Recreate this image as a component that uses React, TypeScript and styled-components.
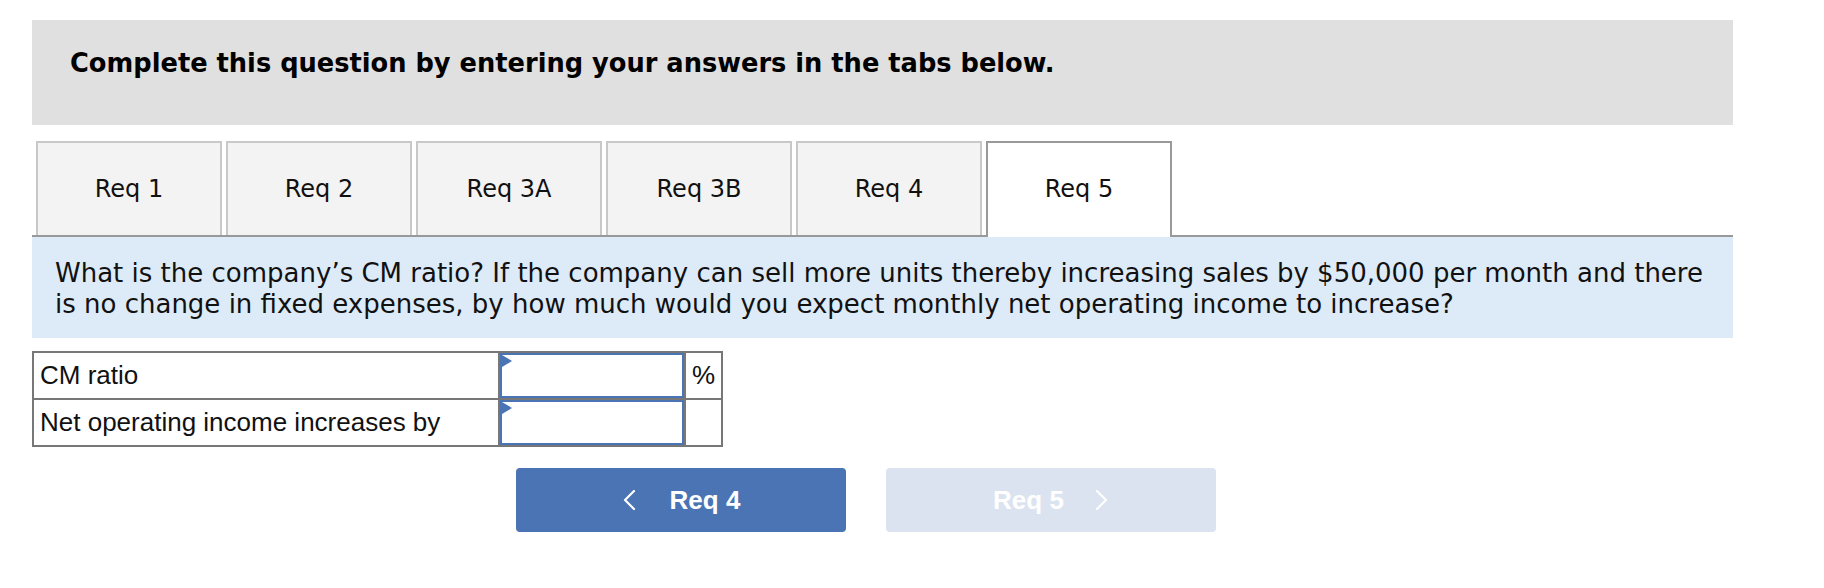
import React from "react";
import styled, { createGlobalStyle } from "styled-components";

const GlobalStyle = createGlobalStyle`
  html, body {
    margin: 0;
    padding: 0;
    background: #ffffff;
  }
  body {
    font-family: "DejaVu Sans", "Liberation Sans", sans-serif;
    color: #000;
  }
  * { box-sizing: border-box; }
`;

const Page = styled.div`
  width: 1733px;
  padding: 20px 0 40px 32px;
`;

const Header = styled.div`
  background: #e0e0e0;
  height: 105px;
  padding: 28px 0 0 38px;
`;

const HeaderText = styled.h2`
  margin: 0;
  font-family: "DejaVu Sans", sans-serif;
  font-weight: bold;
  font-size: 25.7px;
  line-height: 30px;
  color: #000;
`;

const TabBar = styled.div`
  margin-top: 16px;
  display: flex;
  align-items: flex-end;
  gap: 4px;
  padding-left: 4px;
  height: 96px;
  border-bottom: 2px solid #999999;
`;

const Tab = styled.button<{ $active?: boolean }>`
  width: 186px;
  height: ${(p) => (p.$active ? "96px" : "94px")};
  margin-bottom: ${(p) => (p.$active ? "-2px" : "0")};
  border: 2px solid ${(p) => (p.$active ? "#999999" : "#c8c8c8")};
  border-bottom: none;
  background: ${(p) => (p.$active ? "#ffffff" : "#f3f3f3")};
  font-family: "DejaVu Sans", sans-serif;
  font-size: 24px;
  color: #111;
  display: flex;
  align-items: center;
  justify-content: center;
  padding: 0 0 ${(p) => (p.$active ? "2px" : "0")};
  cursor: pointer;
`;

const Question = styled.div`
  background: #ddeaf7;
  padding: 21px 20px 19px 23px;
  font-family: "DejaVu Sans", sans-serif;
  font-size: 26px;
  line-height: 30.5px;
  color: #111;
  white-space: nowrap;
`;

const Grid = styled.div`
  margin-top: 13px;
  display: grid;
  grid-template-columns: 466px 186px 37px;
  grid-auto-rows: 47px;
  width: 691px;
  border-top: 2px solid #777777;
  border-left: 2px solid #777777;
`;

const Cell = styled.div`
  border-right: 2px solid #777777;
  border-bottom: 2px solid #777777;
  display: flex;
  align-items: center;
  font-family: "Liberation Sans", Arial, sans-serif;
  font-size: 26px;
  color: #111;
`;

const LabelCell = styled(Cell)`
  padding-left: 6px;
`;

const UnitCell = styled(Cell)`
  justify-content: center;
`;

const InputCell = styled(Cell)`
  position: relative;
  padding: 0;
`;

const Field = styled.input`
  width: 100%;
  height: 100%;
  margin: 0;
  border: 2px solid #4a74b4;
  outline: none;
  background: #fff;
  font-family: "Liberation Sans", Arial, sans-serif;
  font-size: 24px;
  padding: 0 6px;
`;

const Marker = styled.span`
  position: absolute;
  top: 2px;
  left: 2px;
  width: 0;
  height: 0;
  border-left: 10px solid #4a74b4;
  border-top: 6px solid transparent;
  border-bottom: 6px solid transparent;
  pointer-events: none;
`;

const NavRow = styled.div`
  margin-top: 21px;
  margin-left: 484px;
  display: flex;
  gap: 40px;
`;

const NavButton = styled.button<{ $disabled?: boolean }>`
  width: 330px;
  height: 64px;
  border: none;
  border-radius: 4px;
  background: ${(p) => (p.$disabled ? "#dae3ef" : "#4a74b4")};
  color: #ffffff;
  font-family: "Liberation Sans", Arial, sans-serif;
  font-weight: bold;
  font-size: 26px;
  display: flex;
  align-items: center;
  justify-content: center;
  gap: ${(p) => (p.$disabled ? "31px" : "34px")};
  padding: 0;
  cursor: ${(p) => (p.$disabled ? "default" : "pointer")};
`;

const Chevron = ({ dir }: { dir: "left" | "right" }) => (
  <svg width="14" height="22" viewBox="0 0 14 22" fill="none">
    <path
      d={dir === "left" ? "M12 2 L3 11 L12 20" : "M2 2 L11 11 L2 20"}
      stroke="#ffffff"
      strokeWidth="2.2"
      strokeLinecap="round"
      strokeLinejoin="round"
    />
  </svg>
);

const tabs = ["Req 1", "Req 2", "Req 3A", "Req 3B", "Req 4", "Req 5"];

export default function App() {
  return (
    <>
      <GlobalStyle />
      <Page>
        <Header>
          <HeaderText>Complete this question by entering your answers in the tabs below.</HeaderText>
        </Header>
        <TabBar>
          {tabs.map((t) => (
            <Tab key={t} $active={t === "Req 5"}>
              {t}
            </Tab>
          ))}
        </TabBar>
        <Question>
          What is the company’s CM ratio? If the company can sell more units thereby increasing sales by $50,000 per month and there
          <br />
          is no change in fixed expenses, by how much would you expect monthly net operating income to increase?
        </Question>
        <Grid>
          <LabelCell>CM ratio</LabelCell>
          <InputCell>
            <Field type="text" aria-label="CM ratio" />
            <Marker />
          </InputCell>
          <UnitCell>%</UnitCell>
          <LabelCell>Net operating income increases by</LabelCell>
          <InputCell>
            <Field type="text" aria-label="Net operating income increases by" />
            <Marker />
          </InputCell>
          <UnitCell />
        </Grid>
        <NavRow>
          <NavButton>
            <Chevron dir="left" />
            <span>Req 4</span>
          </NavButton>
          <NavButton $disabled>
            <span>Req 5</span>
            <Chevron dir="right" />
          </NavButton>
        </NavRow>
      </Page>
    </>
  );
}
